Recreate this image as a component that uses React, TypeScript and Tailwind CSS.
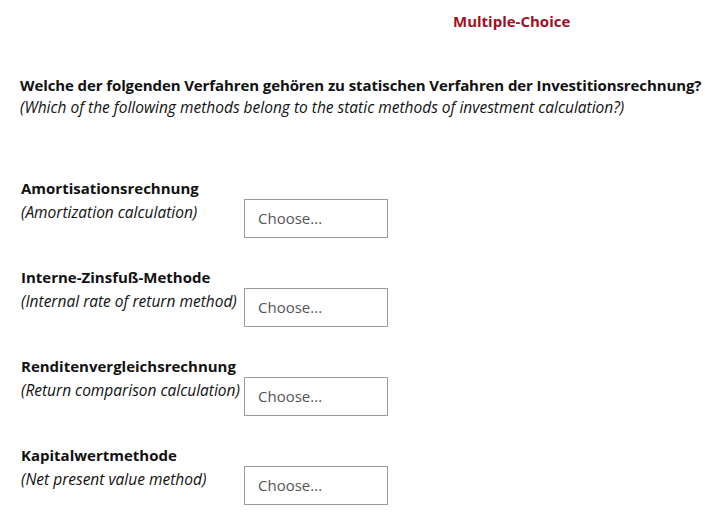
const ITEMS = [
  { de: 'Amortisationsrechnung', en: '(Amortization calculation)' },
  { de: 'Interne-Zinsfuß-Methode', en: '(Internal rate of return method)' },
  { de: 'Renditenvergleichsrechnung', en: '(Return comparison calculation)' },
  { de: 'Kapitalwertmethode', en: '(Net present value method)' },
]

export default function App() {
  return (
    <div className="h-[515px] w-[705px] overflow-hidden bg-white text-[15px] text-[#111] [font-family:'Open_Sans',sans-serif]">
      <h1 className="pt-[10px] pl-[453px] text-[15px] font-bold leading-[22px] text-[#a20f1f]">Multiple-Choice</h1>

      <div className="mt-[42px] pl-[20px]">
        <p className="whitespace-nowrap font-bold leading-[22px] tracking-[-0.1px]">
          Welche der folgenden Verfahren gehören zu statischen Verfahren der Investitionsrechnung?
        </p>
        <p className="text-[15.5px] italic leading-[22px]">
          (Which of the following methods belong to the static methods of investment calculation?)
        </p>
      </div>

      <div className="mt-[58px] flex flex-col gap-[27px] pl-[21px]">
        {ITEMS.map((item) => (
          <div key={item.de} className="flex items-start">
            <div className="w-[223px]">
              <p className="font-bold leading-[24px]">{item.de}</p>
              <p className="whitespace-nowrap text-[15.5px] italic leading-[24px]">{item.en}</p>
            </div>
            <div className="mt-[23px] flex h-[39px] w-[144px] items-center border border-[#9a9a9a] px-[13px] text-[#555]">
              Choose...
            </div>
          </div>
        ))}
      </div>
    </div>
  )
}
